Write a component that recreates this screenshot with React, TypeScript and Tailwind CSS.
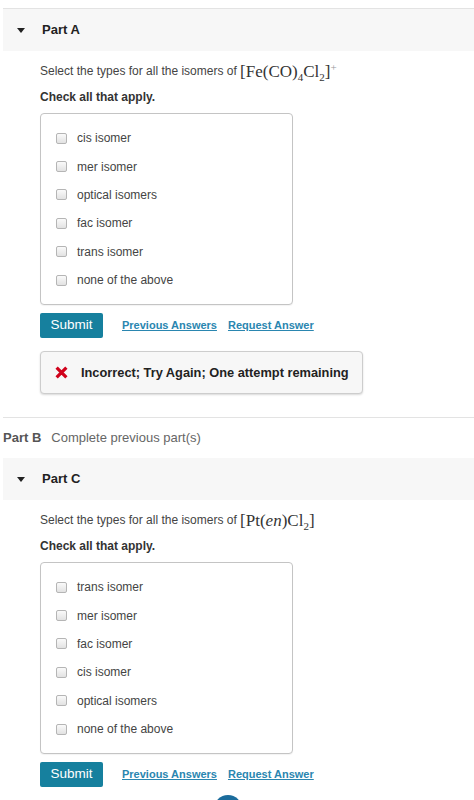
import React from 'react';

const sans = { fontFamily: '"Liberation Sans", Arial, sans-serif' };

const Checkbox = () => (
  <span className="inline-block h-[11px] w-[11px] shrink-0 rounded-[2px] border border-[#b5b5b5] bg-gradient-to-b from-[#fafafa] to-[#e2e2e2]" />
);

const Caret = () => (
  <svg width="8" height="5" viewBox="0 0 8 5" className="shrink-0">
    <path d="M0 0 L8 0 L4 5 Z" fill="#222" />
  </svg>
);

const PartHeader = ({ label }: { label: string }) => (
  <div className="ml-[3px] flex h-[42px] items-center bg-[#f7f7f7] pl-[14px]">
    <Caret />
    <span className="ml-[17px] text-[13px] font-bold text-[#222]">{label}</span>
  </div>
);

const Options = ({ items }: { items: string[] }) => (
  <div className="mt-[8px] h-[192px] w-[253px] rounded-[4px] border border-[#c4c4c4] bg-white pt-[10px] shadow-[0_1px_1px_rgba(0,0,0,0.05)]">
    {items.map((item) => (
      <div key={item} className="flex h-[28.4px] items-center pl-[15px]">
        <Checkbox />
        <span className="ml-[10px] text-[12px] text-[#444]">{item}</span>
      </div>
    ))}
  </div>
);

const Actions = () => (
  <div className="mt-[8px] flex items-center">
    <button className="h-[25px] w-[63px] rounded-[2px] bg-[#16809e] text-[13.5px] text-white">Submit</button>
    <a className="ml-[19px] text-[11px] font-bold text-[#2a86b0] underline">Previous Answers</a>
    <a className="ml-[11px] text-[11px] font-bold text-[#2a86b0] underline">Request Answer</a>
  </div>
);

const Sub = ({ children }: { children: React.ReactNode }) => (
  <span className="relative top-[4px] text-[11px] leading-none">{children}</span>
);

const Question = ({ formula }: { formula: React.ReactNode }) => (
  <div className="pl-[40px]">
    <p className="mt-[11px] flex h-[18px] items-center text-[12px] leading-none text-[#444]">
      Select the types for all the isomers of&nbsp;
      <span
        className="text-[17px] leading-none text-[#333]"
        style={{ fontFamily: '"Liberation Serif", "DejaVu Serif", serif' }}
      >
        {formula}
      </span>
    </p>
    <p className="mt-[9px] flex h-[16px] items-center text-[12px] font-bold text-[#333]">Check all that apply.</p>
  </div>
);

const App = () => {
  return (
    <div className="relative h-[800px] w-[474px] overflow-hidden bg-white" style={sans}>
      <div className="h-[8px]" />
      <div className="ml-[3px] border-t border-[#e3e3e3]" />

      {/* Part A */}
      <PartHeader label="Part A" />
      <Question
        formula={
          <>
            [Fe(CO)<Sub>4</Sub>Cl<Sub>2</Sub>]
            <span className="relative top-[-6px] text-[11px] leading-none text-[#999]">+</span>
          </>
        }
      />
      <div className="pl-[40px]">
        <Options items={['cis isomer', 'mer isomer', 'optical isomers', 'fac isomer', 'trans isomer', 'none of the above']} />
        <Actions />
        <div className="mt-[13px] flex h-[43px] w-[323px] items-center rounded-[4px] border border-[#cdcdcd] bg-[#f7f7f7] pl-[14px] shadow-[0_1px_2px_rgba(0,0,0,0.15)]">
          <svg width="13" height="13" viewBox="0 0 12 12">
            <path d="M1.5 1.5 L10.5 10.5 M10.5 1.5 L1.5 10.5" stroke="#d0021b" strokeWidth="3" />
          </svg>
          <span className="ml-[13px] text-[12.8px] font-bold text-[#222]">Incorrect; Try Again; One attempt remaining</span>
        </div>
      </div>

      <div className="ml-[3px] mt-[23px] border-t border-[#e3e3e3]" />

      {/* Part B */}
      <div className="ml-[3px] flex h-[40px] items-center text-[13px]">
        <span className="font-bold text-[#555]">Part B</span>
        <span className="ml-[10px] text-[#666]">Complete previous part(s)</span>
      </div>

      {/* Part C */}
      <PartHeader label="Part C" />
      <Question
        formula={
          <>
            [Pt(<i>en</i>)Cl<Sub>2</Sub>]
          </>
        }
      />
      <div className="pl-[40px]">
        <Options items={['trans isomer', 'mer isomer', 'fac isomer', 'cis isomer', 'optical isomers', 'none of the above']} />
        <Actions />
      </div>

      <div className="absolute left-[214px] top-[795px] h-[28px] w-[28px] rounded-full bg-[#1b6c9c]" />
    </div>
  );
};

export default App;
